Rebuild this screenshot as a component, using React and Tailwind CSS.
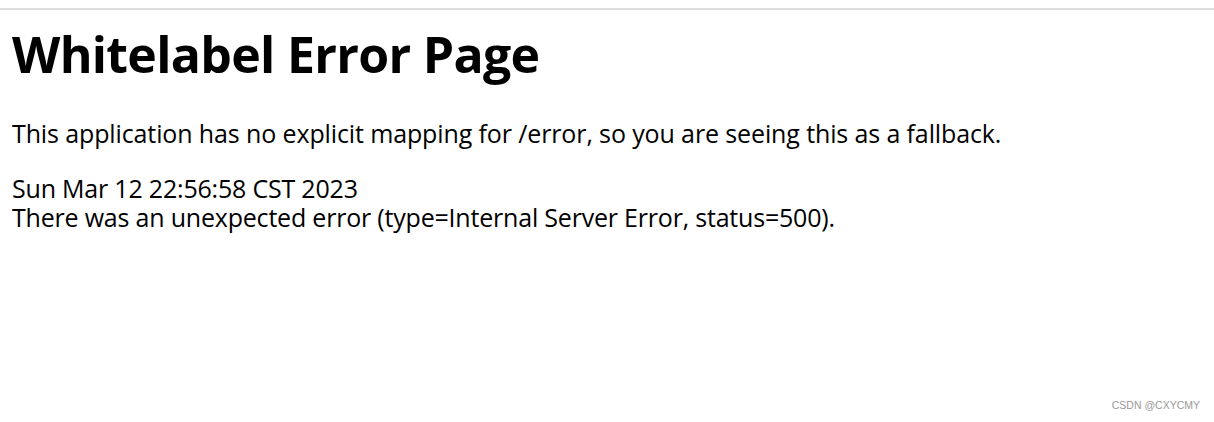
import React from 'react';

const App = () => {
    return (
        <div className="relative h-[422px] w-full overflow-hidden bg-white text-black" style={{ fontFamily: '"Open Sans", "Noto Sans", sans-serif' }}>
            <div className="mt-2 h-[2px] bg-[#dddddd]" />
            <main className="px-3">
                <h1 className="mt-[14px] text-[50px] font-bold leading-[60px] tracking-[-0.7px]">Whitelabel Error Page</h1>
                <p className="mt-[35px] text-[25px] leading-[29px] tracking-[-0.12px]">
                    This application has no explicit mapping for /error, so you are seeing this as a fallback.
                </p>
                <div className="mt-[26px] text-[25px] leading-[29px] tracking-[-0.2px]">
                    <div>Sun Mar 12 22:56:58 CST 2023</div>
                    <div>There was an unexpected error (type=Internal Server Error, status=500).</div>
                </div>
            </main>
            <span className="absolute bottom-[8px] right-[14px] text-[10.5px] text-[#999999]" style={{ fontFamily: '"Liberation Sans", sans-serif' }}>
                CSDN @CXYCMY
            </span>
        </div>
    );
};

export default App;
